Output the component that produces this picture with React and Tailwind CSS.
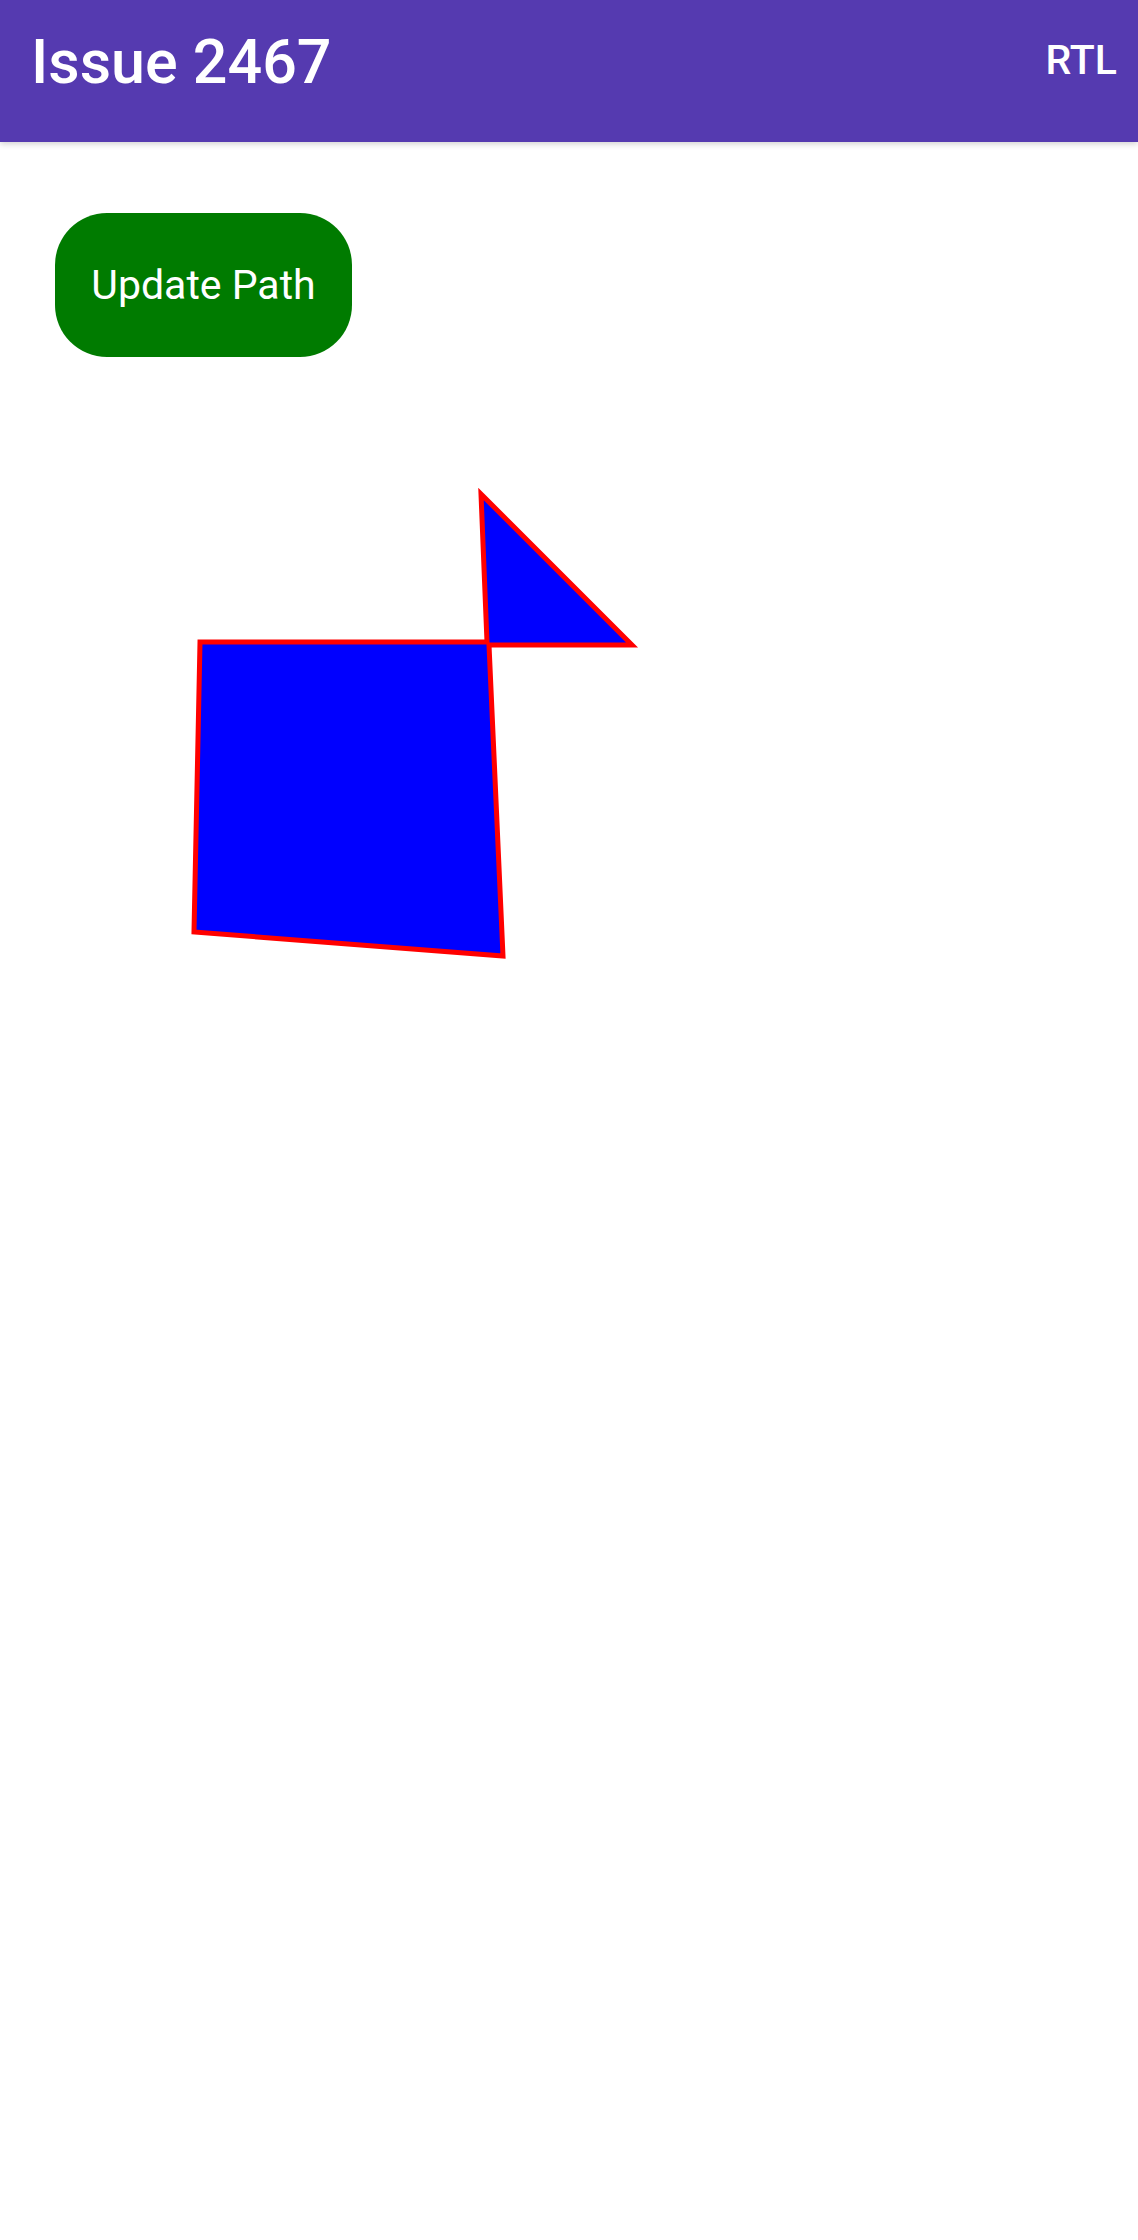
import React from 'react';

export default function App() {
  return (
    <div className="min-h-[2240px] bg-white" style={{ fontFamily: 'Roboto, "Noto Sans", sans-serif' }}>
      <header className="relative z-10 flex h-[142px] items-start justify-between bg-[#553ab0] pl-[31px] pr-[21px] shadow-[0_2px_6px_rgba(0,0,0,0.18)]">
        <h1 className="mt-[27px] text-[61px] font-medium leading-[70px] text-white">Issue 2467</h1>
        <span className="mt-[36px] text-[41px] font-medium leading-[48px] text-white">RTL</span>
      </header>
      <div className="pl-[55px] pt-[71px]">
        <button className="flex h-[144px] w-[297px] items-center justify-center rounded-[52px] bg-[#007b00] text-[41px] leading-none text-white">
          Update Path
        </button>
      </div>
      <svg width="1138" height="700" viewBox="0 357 1138 700" className="block">
        <path
          d="M200 642 L487 642 L481 494 L632 645 L489 645 L503 956 L194 932 Z"
          fill="#0000ff"
          stroke="#ff0000"
          strokeWidth="5"
          strokeLinejoin="miter"
        />
      </svg>
    </div>
  );
}
